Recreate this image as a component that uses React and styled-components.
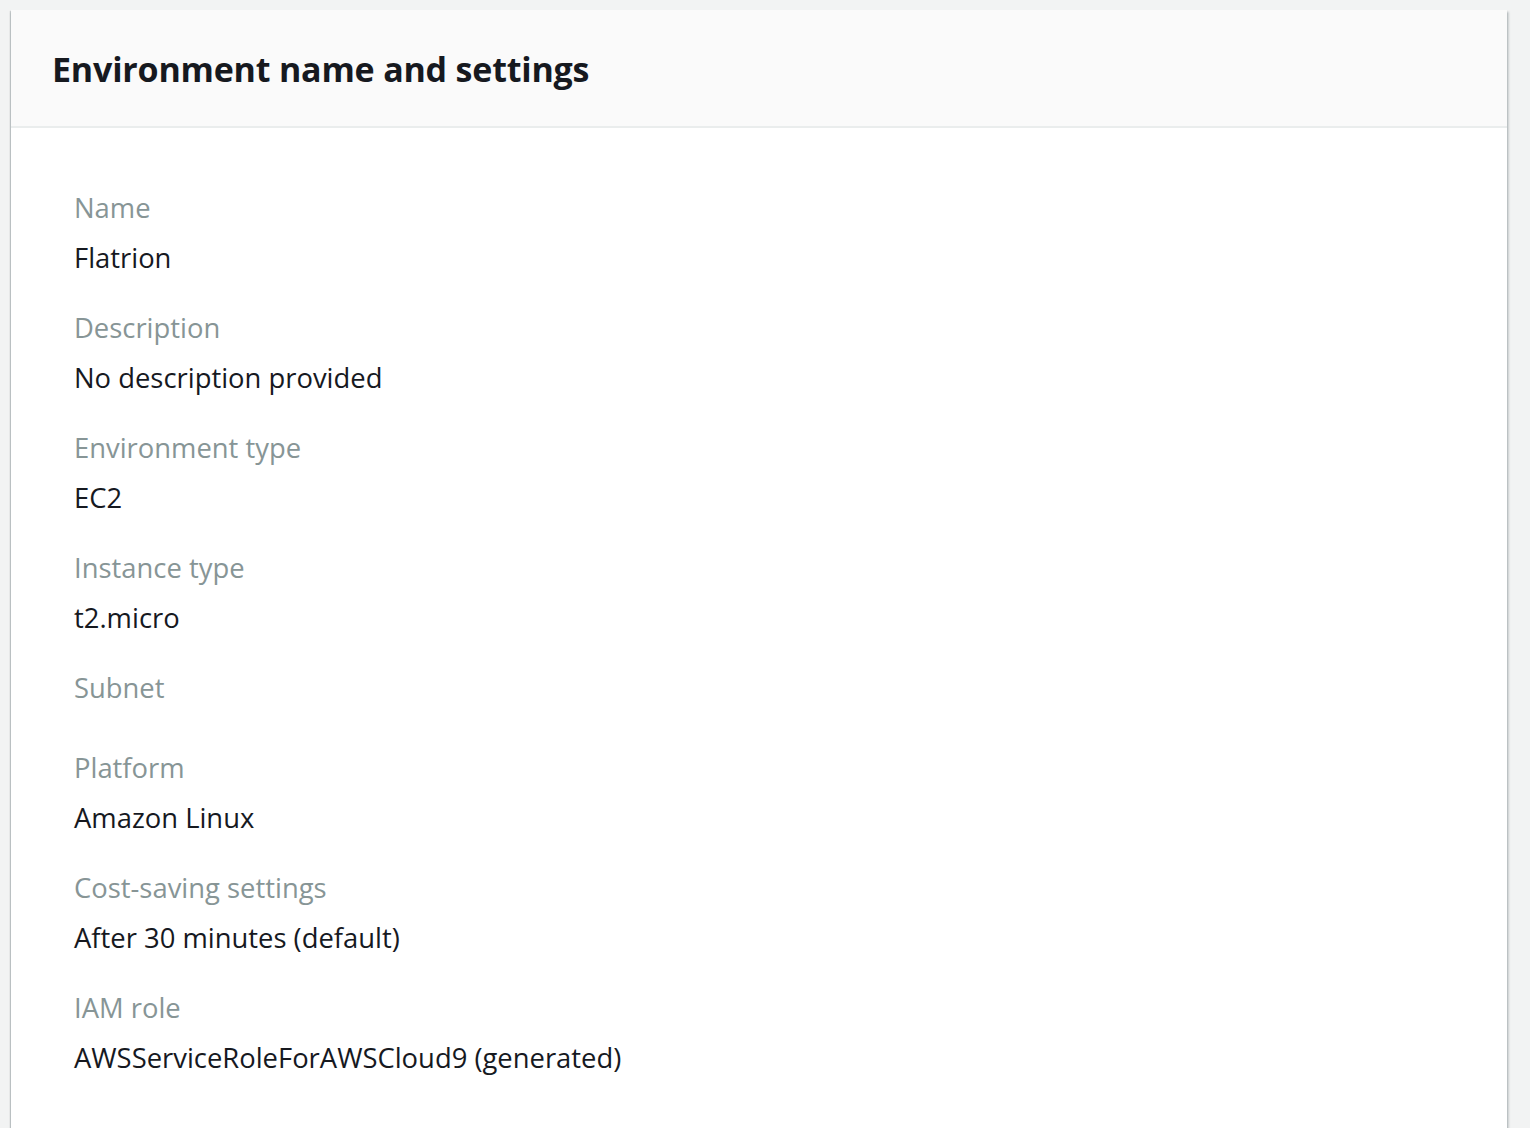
import React from "react";
import styled, { createGlobalStyle } from "styled-components";

const GlobalStyle = createGlobalStyle`
  html, body {
    margin: 0;
    padding: 0;
    background: #f2f3f3;
    overflow: hidden;
  }
  body {
    font-family: "Open Sans", "Noto Sans", sans-serif;
    color: #16191f;
  }
`;

const settings = [
  { label: "Name", value: "Flatrion" },
  { label: "Description", value: "No description provided" },
  { label: "Environment type", value: "EC2" },
  { label: "Instance type", value: "t2.micro" },
  { label: "Subnet", value: "" },
  { label: "Platform", value: "Amazon Linux" },
  { label: "Cost-saving settings", value: "After 30 minutes (default)" },
  { label: "IAM role", value: "AWSServiceRoleForAWSCloud9 (generated)" },
];

const App = () => {
  return (
    <>
      <GlobalStyle />
      <Page>
        <Card>
          <CardHeader>
            <Title>Environment name and settings</Title>
          </CardHeader>
          <CardBody>
            {settings.map((item) => (
              <Field key={item.label}>
                <Label>{item.label}</Label>
                {item.value && <Value>{item.value}</Value>}
              </Field>
            ))}
          </CardBody>
        </Card>
      </Page>
    </>
  );
};

export default App;

const Page = styled.div`
  height: 100vh;
  padding: 10px 23px 0 11px;
  box-sizing: border-box;
  overflow: hidden;
`;

const Card = styled.section`
  background: #fff;
  min-height: calc(100% + 20px);
  box-shadow: 0 2px 2px 0 rgba(0, 28, 36, 0.3),
    2px 2px 2px 0 rgba(0, 28, 36, 0.15),
    -1px 1px 1px 0 rgba(0, 28, 36, 0.15);
`;

const CardHeader = styled.header`
  display: flex;
  align-items: center;
  height: 118px;
  padding: 2px 0 0 41px;
  box-sizing: border-box;
  background: #fafafa;
  border-bottom: 2px solid #eaeded;
`;

const Title = styled.h2`
  margin: 0;
  font-size: 34px;
  font-weight: 700;
  line-height: 48px;
  color: #16191f;
  letter-spacing: -0.2px;
`;

const CardBody = styled.div`
  display: flex;
  flex-direction: column;
  gap: 20px;
  padding: 50px 0 40px 63px;
`;

const Field = styled.div`
  display: flex;
  flex-direction: column;
`;

const Label = styled.div`
  font-size: 27.4px;
  line-height: 40px;
  padding: 10px 0;
  color: #879596;
`;

const Value = styled.div`
  font-size: 27.4px;
  line-height: 40px;
  color: #16191f;
`;
